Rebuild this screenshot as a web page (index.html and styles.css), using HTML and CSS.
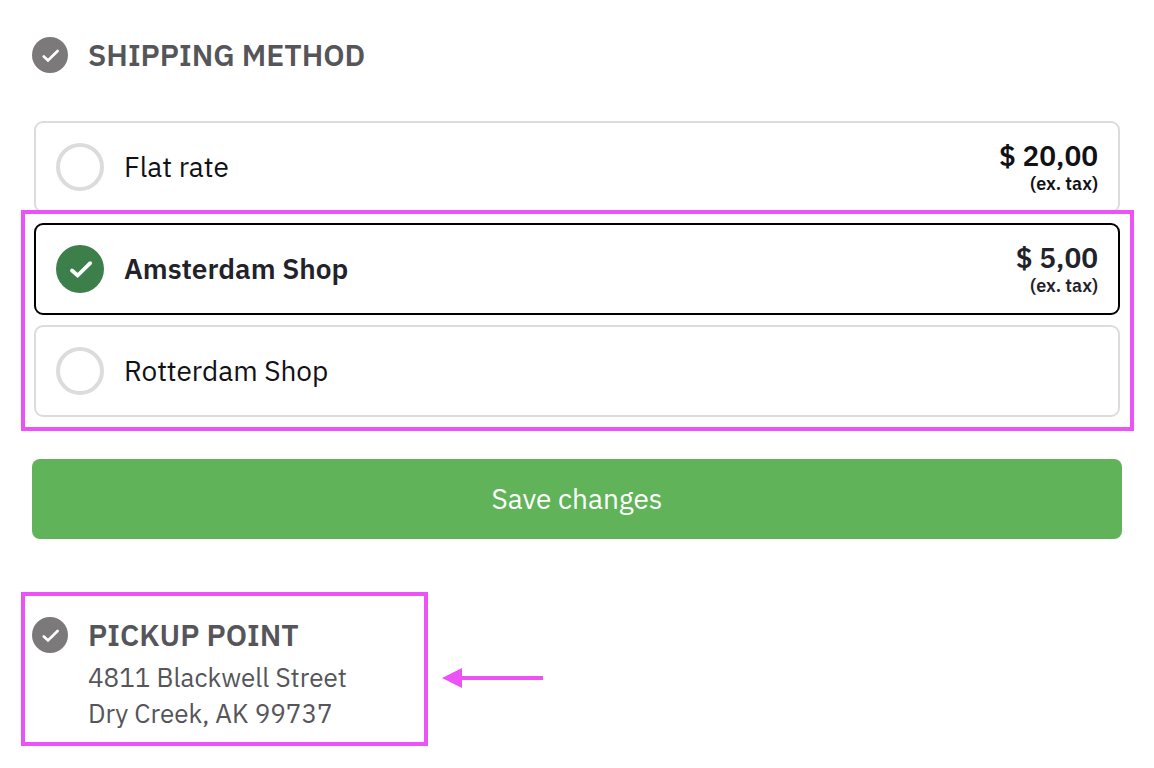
FILE: index.html
```html
<!DOCTYPE html>
<html lang="en">
  <head>
    <meta charset="UTF-8" />
    <meta name="viewport" content="width=device-width, initial-scale=1.0" />
    <title>Checkout</title>
    <link rel="stylesheet" href="styles.css">
  </head>
  <body>
    <form class="shipping">
      <div class="step-header">
        <svg class="step-icon" viewBox="0 0 36 36" aria-hidden="true">
          <circle cx="18" cy="18" r="18" />
          <path d="M11.8 19.5L16 23.4L25.6 14" />
        </svg>
        <h2>SHIPPING METHOD</h2>
      </div>

      <div class="options">
        <label class="option">
          <span class="radio">
            <input type="radio" name="shipping-method" value="flat-rate" />
            <svg viewBox="0 0 48 48" aria-hidden="true">
              <path d="M16 25.5L21.6 30.5L34.2 18.2" />
            </svg>
          </span>
          <span class="option-name">Flat rate</span>
          <span class="price">
            <span class="amount">$ 20,00</span>
            <span class="tax">(ex. tax)</span>
          </span>
        </label>

        <div class="pickup-options">
          <label class="option">
            <span class="radio">
              <input type="radio" name="shipping-method" value="amsterdam" checked />
              <svg viewBox="0 0 48 48" aria-hidden="true">
                <path d="M16 25.5L21.6 30.5L34.2 18.2" />
              </svg>
            </span>
            <span class="option-name">Amsterdam Shop</span>
            <span class="price">
              <span class="amount">$ 5,00</span>
              <span class="tax">(ex. tax)</span>
            </span>
          </label>

          <label class="option">
            <span class="radio">
              <input type="radio" name="shipping-method" value="rotterdam" />
              <svg viewBox="0 0 48 48" aria-hidden="true">
                <path d="M16 25.5L21.6 30.5L34.2 18.2" />
              </svg>
            </span>
            <span class="option-name">Rotterdam Shop</span>
          </label>
        </div>
      </div>

      <button type="button" class="save-btn">Save changes</button>
    </form>

    <div class="pickup-row">
      <section class="pickup-point">
        <div class="step-header">
          <svg class="step-icon" viewBox="0 0 36 36" aria-hidden="true">
            <circle cx="18" cy="18" r="18" />
            <path d="M11.8 19.5L16 23.4L25.6 14" />
          </svg>
          <h2>PICKUP POINT</h2>
        </div>
        <address>
          4811 Blackwell Street<br />
          Dry Creek, AK 99737
        </address>
      </section>

      <svg class="arrow" viewBox="0 0 101 20" aria-hidden="true">
        <path d="M0 10L20 0V8H101V12H20V20Z" />
      </svg>
    </div>
  </body>
</html>
```

FILE: styles.css
```css
* {
  box-sizing: border-box;
}

body {
  margin: 0;
  padding: 35px 32px 20px;
  background: #fff;
  color: #111116;
  font-family: "IBM Plex Sans", "Noto Sans", sans-serif;
  font-size: 28px;
  line-height: 36px;
}

.step-header {
  display: flex;
  align-items: center;
  gap: 20px;
}

.step-header h2 {
  margin: 0;
  color: #55555a;
  font-size: 30px;
  font-weight: 600;
  line-height: 40px;
}

.step-icon {
  width: 36px;
  height: 36px;
}

.step-icon circle {
  fill: #7b7979;
}

.step-icon path {
  fill: none;
  stroke: #fff;
  stroke-width: 2.7;
  stroke-linecap: round;
}

.options,
.pickup-options {
  display: flex;
  flex-direction: column;
  gap: 10px;
}

.options {
  margin: 46px 2px 42px;
}

.pickup-options {
  position: relative;
}

/* pink frame around the shop options */
.pickup-options::after {
  content: "";
  position: absolute;
  inset: -13px -14px -14px -13px;
  border: 4px solid #eb52f7;
  pointer-events: none;
}

.option {
  display: flex;
  align-items: center;
  gap: 20px;
  min-height: 92px;
  padding: 0 20px;
  border: 2px solid #dcdcdc;
  border-radius: 9px;
  cursor: pointer;
}

.option:has(input:checked) {
  border-color: #000;
  color: #22222a;
  font-weight: 600;
}

.radio {
  display: grid;
  width: 48px;
  height: 48px;
}

.radio input,
.radio svg {
  grid-area: 1 / 1;
  width: 48px;
  height: 48px;
  margin: 0;
}

.radio input {
  appearance: none;
  border: 4px solid #dcdcdc;
  border-radius: 50%;
  cursor: pointer;
}

.radio input:checked {
  border: none;
  background: #3c7f4b;
}

.radio path {
  fill: none;
  stroke: #fff;
  stroke-width: 3.8;
  stroke-linecap: round;
}

.option-name {
  flex: 1;
}

.price {
  display: flex;
  flex-direction: column;
  padding-top: 2px;
  text-align: right;
  font-weight: 600;
}

.amount {
  line-height: 32px;
}

.tax {
  font-size: 18px;
  line-height: 24px;
}

.save-btn {
  display: block;
  width: 100%;
  height: 80px;
  border: none;
  border-radius: 8px;
  background: #60b359;
  color: #fff;
  font: inherit;
  cursor: pointer;
}

.save-btn:hover {
  background: #52a14b;
}

.pickup-row {
  display: flex;
  align-items: center;
  gap: 14px;
  margin: 53px 0 0 -11px;
}

.pickup-point {
  width: 407px;
  padding: 19px 7px 11px;
  border: 4px solid #eb52f7;
}

.pickup-point address {
  margin: 4px 0 0 56px;
  color: #55555a;
  font-size: 26px;
  font-style: normal;
}

.arrow {
  width: 101px;
  height: 20px;
  margin-top: 18px;
  fill: #eb52f7;
}
```
